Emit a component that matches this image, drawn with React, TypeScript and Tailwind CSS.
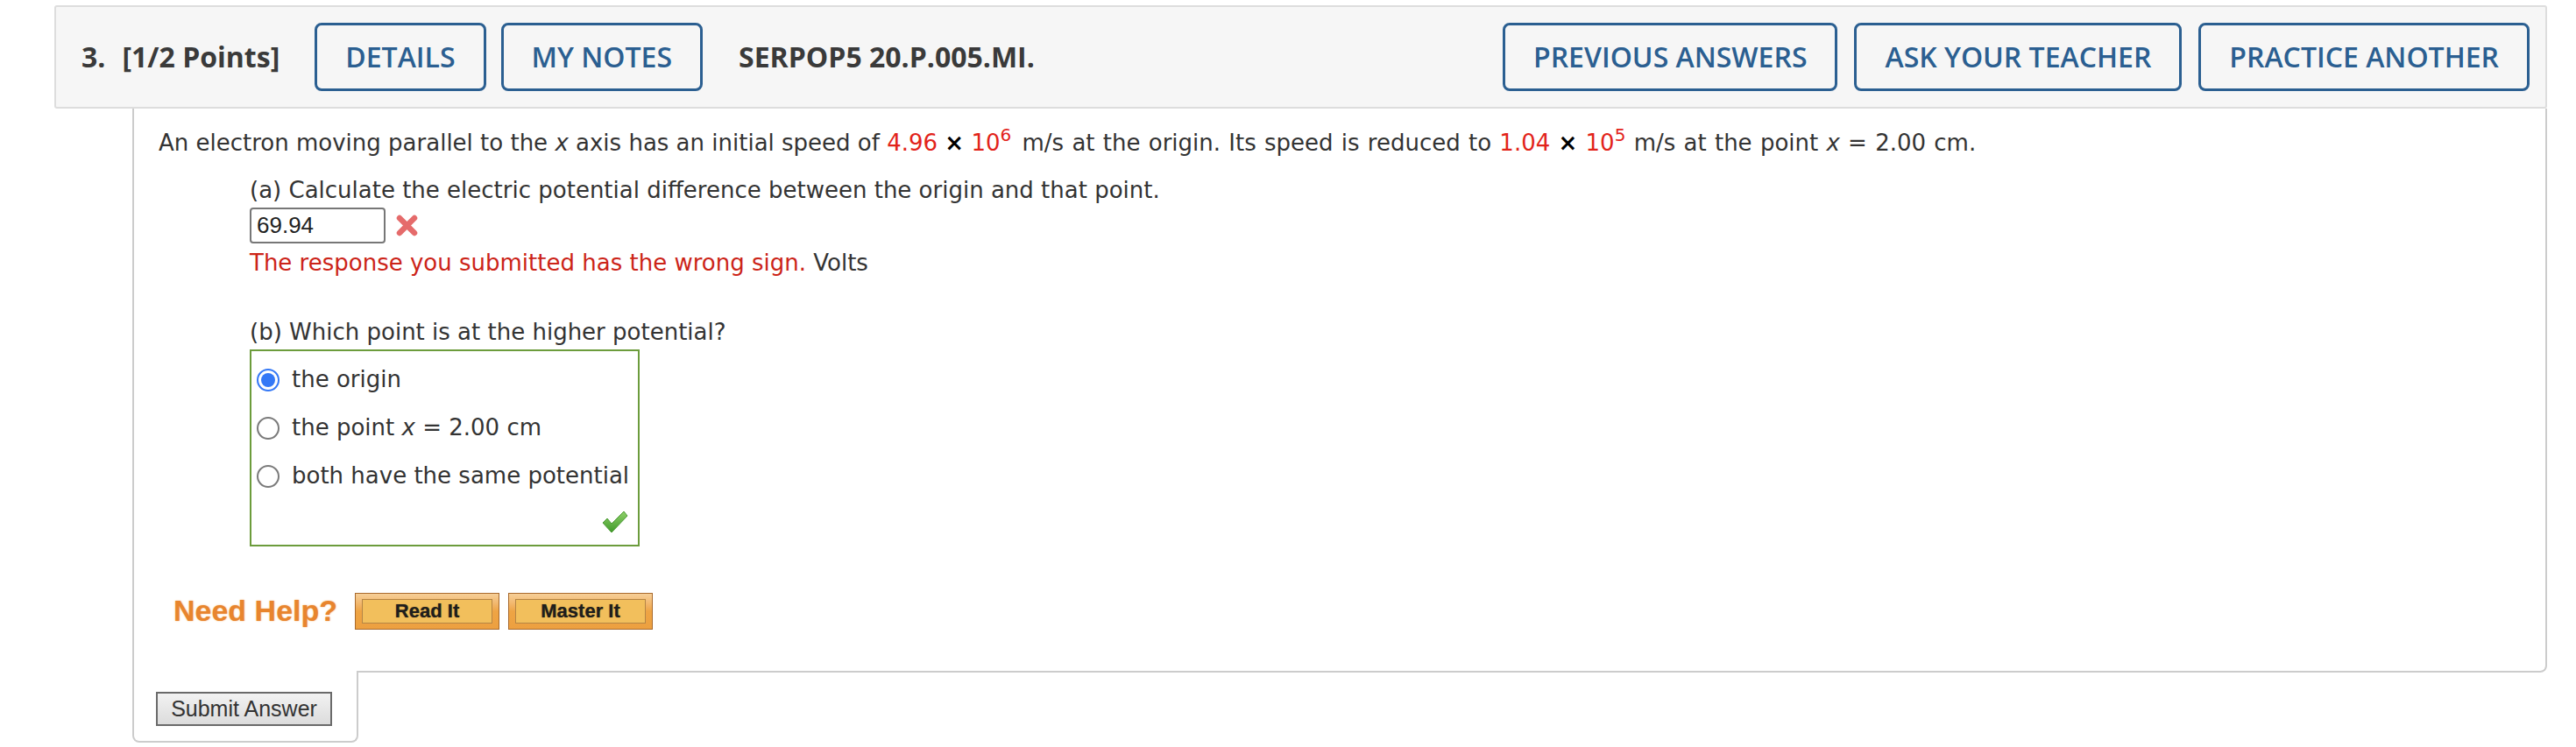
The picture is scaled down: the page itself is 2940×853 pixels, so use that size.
import React from "react";

const HeaderBtn = ({ children }: { children: React.ReactNode }) => (
  <div className="h-[78px] px-[32px] flex items-center border-[3px] border-[#2b5f91] rounded-[8px] text-[#2b5f91] font-semibold text-[32px] whitespace-nowrap">
    {children}
  </div>
);

const Radio = ({ checked }: { checked?: boolean }) =>
  checked ? (
    <div className="w-[26px] h-[26px] rounded-full border-[2px] border-[#3478f6] bg-white flex items-center justify-center">
      <div className="w-[16px] h-[16px] rounded-full bg-[#3478f6]" />
    </div>
  ) : (
    <div className="w-[26px] h-[26px] rounded-full border-[2px] border-[#7a7a7a] bg-white" />
  );

const HelpBtn = ({ label }: { label: string }) => (
  <div className="w-[165px] h-[42px] border border-[#a8692c] bg-gradient-to-b from-[#f6cf98] via-[#eea444] to-[#eda040] px-[7px] py-[6px]">
    <div className="w-full h-full border border-[#b58545] bg-[#f2bf5c] flex items-center justify-center font-['Liberation_Sans'] font-bold text-[22px] text-[#1e1e1e] [text-shadow:0_0_1px_#6b4a10]">
      {label}
    </div>
  </div>
);

const Red = ({ children }: { children: React.ReactNode }) => (
  <span className="text-[#e2231a]">{children}</span>
);

const Sup = ({ children }: { children: React.ReactNode }) => (
  <span className="text-[20px] relative top-[-11px] leading-none">{children}</span>
);

export default function App() {
  return (
    <div className="w-[2940px] h-[853px] bg-white overflow-hidden font-['DejaVu_Sans',Verdana,sans-serif] text-[#333]">
      <div className="ml-[62px] pt-[6px] w-[2845px]">
        {/* header */}
        <div className="h-[118px] flex items-center border-2 border-[#dddddd] bg-[#f6f6f6] rounded-[3px] pl-[29px] pr-[18px] font-['Open_Sans',sans-serif]">
          <span className="font-bold text-[32px] text-[#3a3a3a] whitespace-nowrap">3.</span>
          <span className="ml-[19px] font-bold text-[32px] text-[#3a3a3a] whitespace-nowrap">[1/2 Points]</span>
          <div className="ml-[40px] flex items-center gap-[17px]">
            <HeaderBtn>DETAILS</HeaderBtn>
            <HeaderBtn>MY NOTES</HeaderBtn>
          </div>
          <span className="ml-[41px] font-bold text-[32px] text-[#3a3a3a] whitespace-nowrap">SERPOP5 20.P.005.MI.</span>
          <div className="ml-auto flex items-center gap-[19px]">
            <HeaderBtn>PREVIOUS ANSWERS</HeaderBtn>
            <HeaderBtn>ASK YOUR TEACHER</HeaderBtn>
            <HeaderBtn>PRACTICE ANOTHER</HeaderBtn>
          </div>
        </div>

        {/* content */}
        <div className="ml-[89px] w-[2756px]">
          <div className="h-[644px] border-l-2 border-r-2 border-b-2 border-[#cccccc] rounded-br-[8px] pl-[28px] pt-[21px] text-[26px]">
            <p className="leading-[36px] whitespace-nowrap">
              An electron moving parallel to the <i>x</i> axis has an initial speed of <Red>4.96</Red>{" "}
              <b className="text-black">×</b>{" "}
              <Red>
                10<Sup>6</Sup>
              </Red>
              <span className="ml-[3px] [word-spacing:1px]">
                {" "}
                m/s at the origin. Its speed is reduced to <Red>1.04</Red> <b className="text-black">×</b>{" "}
                <Red>
                  10<Sup>5</Sup>
                </Red>{" "}
                m/s at the point <i>x</i> = 2.00 cm.
              </span>
            </p>
            <div className="ml-[104px]">
              <p className="mt-[18px] leading-[36px] whitespace-nowrap">
                (a) Calculate the electric potential difference between the origin and that point.
              </p>
              <div className="mt-[2px] flex items-center">
                <div className="w-[155px] h-[41px] border-2 border-[#777] rounded-[4px] flex items-center pl-[6px] font-['Liberation_Sans',Arial,sans-serif] text-[26px] text-[#222]">
                  69.94
                </div>
                <svg className="ml-[11px]" width="27" height="27" viewBox="0 0 27 27">
                  <path d="M5 5 L22 22 M22 5 L5 22" stroke="#e56b6b" strokeWidth="6.5" strokeLinecap="round" />
                </svg>
              </div>
              <p className="mt-[4px] leading-[36px] whitespace-nowrap">
                <span className="text-[#cc2418]">The response you submitted has the wrong sign.</span> Volts
              </p>
              <p className="mt-[43px] leading-[36px] whitespace-nowrap">(b) Which point is at the higher potential?</p>
              <div className="mt-[2px] w-[445px] h-[225px] border-2 border-[#6c9c3c] pt-[5px] pl-[6px] relative">
                <div className="h-[55px] flex items-center gap-[14px]">
                  <Radio checked />
                  <span>the origin</span>
                </div>
                <div className="h-[55px] flex items-center gap-[14px]">
                  <Radio />
                  <span>
                    the point <i>x</i> = 2.00 cm
                  </span>
                </div>
                <div className="h-[55px] flex items-center gap-[14px]">
                  <Radio />
                  <span>both have the same potential</span>
                </div>
                <svg className="absolute right-[10px] bottom-[12px]" width="32" height="28" viewBox="0 0 32 28">
                  <defs>
                    <linearGradient id="gk" x1="0" y1="0" x2="0" y2="1">
                      <stop offset="0" stopColor="#8fd06a" />
                      <stop offset="1" stopColor="#3f9a2a" />
                    </linearGradient>
                  </defs>
                  <path d="M2 15 L7 10 L12 16 L26 2 L30 7 L12 26 Z" fill="url(#gk)" stroke="#4d9a36" strokeWidth="1" strokeLinejoin="round" />
                </svg>
              </div>
            </div>
            <div className="mt-[48px] ml-[17px] flex items-center">
              <span className="font-['Liberation_Sans',Arial,sans-serif] font-bold text-[34px] text-[#e8852e] [text-shadow:0_0_2px_#f3b77a] whitespace-nowrap">
                Need Help?
              </span>
              <div className="ml-[20px] flex gap-[10px]">
                <HelpBtn label="Read It" />
                <HelpBtn label="Master It" />
              </div>
            </div>
          </div>
          <div className="relative -mt-[2px] w-[258px] h-[82px] bg-white border-l-2 border-r-2 border-b-2 border-[#cccccc] rounded-b-[8px] pl-[25px] pt-[24px]">
            <div className="w-[201px] h-[39px] border-2 border-[#6a6a6a] bg-gradient-to-b from-[#f2f2f2] to-[#dcdcdc] flex items-center justify-center font-['Liberation_Sans',Arial,sans-serif] text-[25px] text-[#333]">
              Submit Answer
            </div>
          </div>
        </div>
      </div>
    </div>
  );
}
